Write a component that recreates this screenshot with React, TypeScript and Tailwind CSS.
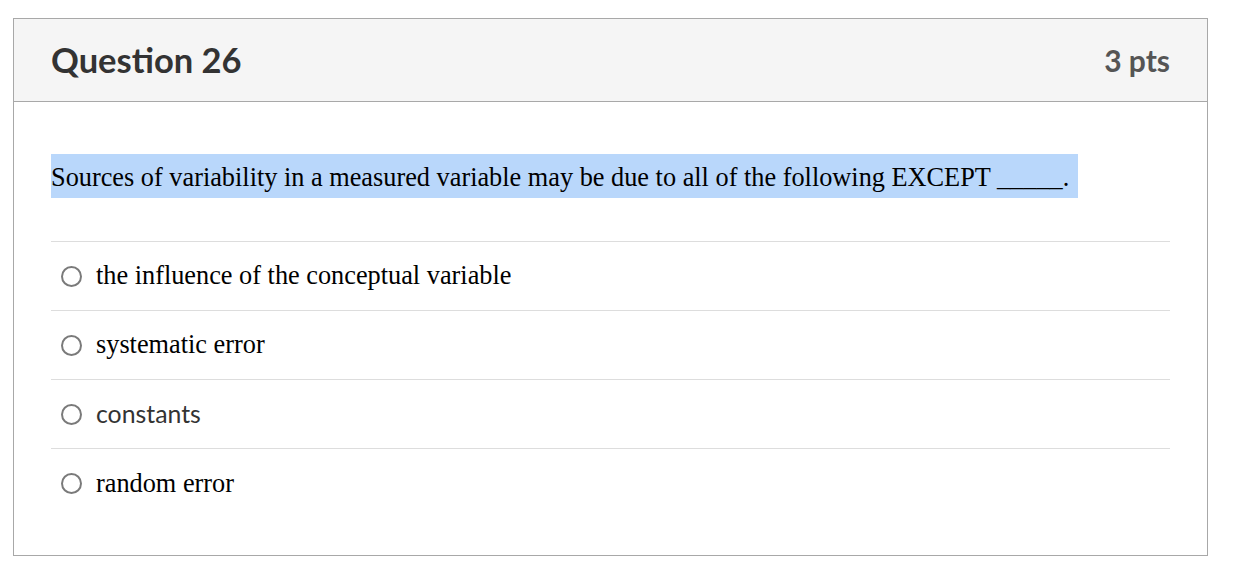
const SERIF = "font-['Liberation_Serif','Times_New_Roman',serif]";

const ANSWERS: { text: string; sans?: boolean }[] = [
  { text: "the influence of the conceptual variable" },
  { text: "systematic error" },
  { text: "constants", sans: true },
  { text: "random error" },
];

function Radio() {
  return <span className="block w-[21px] h-[21px] shrink-0 rounded-full border-2 border-[#7a7a7a] bg-white" />;
}

export default function App() {
  return (
    <div className="w-[1248px] h-[578px] bg-white pt-[18px] pl-[13px]">
      <div className="w-[1195px] h-[538px] border border-[#a8a8a8] bg-white">
        {/* header */}
        <div className="h-[83px] bg-[#f5f5f5] border-b border-[#a8a8a8] flex items-center justify-between pl-[37px] pr-[37px] font-['Lato',sans-serif] font-bold">
          <h2 className="text-[34.5px] text-[#333333]">Question 26</h2>
          <span className="text-[30px] text-[#555555]">3 pts</span>
        </div>

        {/* body */}
        <div className="pl-[37px] pr-[37px] pt-[52px]">
          <p className={`${SERIF} text-[26.3px] h-[44px] text-black`}>
            <span className="bg-[#b9d7fb] inline-block h-[44px] leading-[48px] pr-[9px]">
              Sources of variability in a measured variable may be due to all of the following EXCEPT _____.
            </span>
          </p>

          <div className="mt-[43px] border-t border-[#dddddd]">
            {ANSWERS.map((a, i) => (
              <div
                key={a.text}
                className={`h-[69px] flex items-center gap-[14px] pl-[10px] ${i < ANSWERS.length - 1 ? "border-b border-[#dddddd]" : ""}`}
              >
                <Radio />
                <span
                  className={
                    a.sans
                      ? "font-['Lato',sans-serif] text-[24.8px] text-[#333333]"
                      : `${SERIF} text-[26.3px] text-black`
                  }
                >
                  {a.text}
                </span>
              </div>
            ))}
          </div>
        </div>
      </div>
    </div>
  );
}
